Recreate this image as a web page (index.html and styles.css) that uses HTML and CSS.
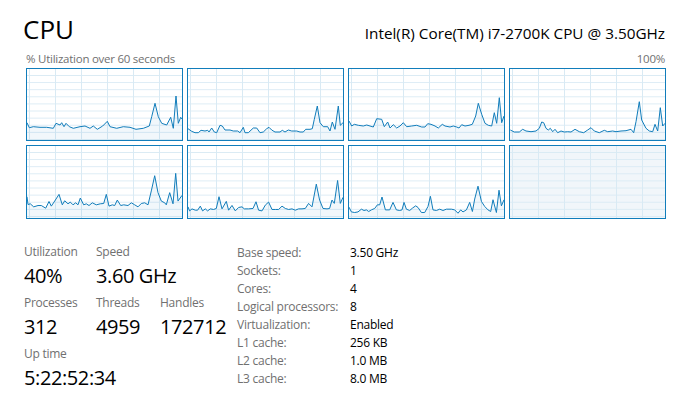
FILE: index.html
```html
<!DOCTYPE html>
<html lang="en">
  <head>
    <meta charset="UTF-8" />
    <meta name="viewport" content="width=device-width, initial-scale=1.0" />
    <title>CPU Performance</title>
    <link rel="stylesheet" href="styles.css">
  </head>
  <body>
    <div class="title-row">
      <h1 class="title">CPU</h1>
      <div class="model">Intel(R) Core(TM) i7-2700K CPU @ 3.50GHz</div>
    </div>

    <div class="graph-caption">
      <span>% Utilization over 60 seconds</span>
      <span>100%</span>
    </div>

    <div class="graphs">
      <div class="graph" data-points="0,53.7 2.3,58.7 6.3,57.7 13,58.3 19.7,58.3 26.3,59.3 29,54.3 33,56 34.7,53.7 37,57.7 39,54.3 42.3,57.7 46.3,59.3 53,57.7 58,57 63,59.3 66.3,57 70.3,60.3 75.7,57 80.3,52.3 83,57.7 89.7,59.3 96.3,57.7 103,58.3 109,60.3 116.3,59.3 122.3,57 124.7,47.7 128,34.3 131.3,47.7 134.7,54.3 139.7,56 143.7,48.3 146.3,59.3 149,27 151.3,54.3 153.7,48.3 155,50"></div>
      <div class="graph" data-points="0,59.7 3.7,62.3 7,63.7 10.3,63.7 13,61.3 17,62 19.7,61.3 21,63 23.7,59 26.3,63 28.7,63.7 32,56.3 34.3,57 37,61 42,61 45.3,62 49.7,62 52,63.7 55.3,58.3 57,63.7 60.3,63.7 65.3,59 68.7,59 72,63.7 75.3,63 78.7,59.7 81,58.3 83.7,61 87,63 92,63 94.3,61.3 97,63 100.3,61 103.7,62 108.7,62 112,63 115.3,63 117.7,60.3 122,60.3 124.3,59.7 126.3,50.3 129.3,37 132,53.7 135.3,57.7 139.7,57.7 142,62 144.3,53 147,60.3 150.3,37 152.3,56.3 155,53.7"></div>
      <div class="graph" data-points="0,52 2.7,57 5.3,55.3 9.3,56.3 14.3,57 17.7,56 21,57 24.3,58 27.7,49.7 32.7,50.3 35.3,57.7 38.7,53 41,59 44.3,55.7 47.7,59 51,57 54.3,53.7 57.7,57.7 62.7,57 67.7,56.3 72.7,58 76,58 78.7,54.7 82,55.3 86,57 89.3,59 93.3,55.3 96,57 101,58 104.3,57 107.7,58 110,59 112.7,55.7 116,57 120,56.3 123.3,55.3 126.7,47 129.3,34.3 132.7,45.3 136,54.3 139.3,56.3 142.7,57 145.3,43.7 147.7,54.3 150.3,28.7 152.7,53.7 155,47"></div>
      <div class="graph" data-points="0.3,61 4.3,63 9.3,63 12.7,60.3 16,62 21,62.7 26,62 29.3,59.3 31.7,53 33.7,53.7 36,59.3 38.3,61 40.3,59.3 42.7,62.7 45,60.3 47.7,63.7 51,62 54.3,63 57.7,62.7 61,63 65,60.3 69.3,62.7 73.7,63.7 77.7,61 81,58.7 84.3,62 89.3,63.7 94.3,61.3 97.7,62.7 102.7,62 106,62.7 111,62 116,61.7 121,60.3 123.7,63.7 126,52.7 129.3,32.7 131.7,51 136,59.3 139.3,62 142.7,62.7 145,55.3 147.7,62 150.3,38.7 152.7,57 155,54.3"></div>
      <div class="graph" data-points="0,50 1,57.7 3.3,57 6.7,60 11,58.7 14.3,58.7 18.7,61.3 22,54.7 24.3,59.3 27.7,54.3 32,47.7 35.3,58 37.7,54 41,57 43.3,55.3 46,58 48.7,56 51,58 53.3,51.3 56.7,58 59.3,57 62,58.7 65.3,56 69.3,58 73.3,57 76.7,56.7 79.3,47.7 82,59.3 85.3,58 87.7,58.7 90.3,53.3 93.7,58.7 96.7,58 101,58.7 104.3,56 107.7,58 111,60 114.3,56.7 117.7,56 121,58 124.3,44.3 127.7,29.3 131,46 134.3,54.3 137.7,56 139.3,58 142.7,46 146,57 148.7,27 151,54.3 155,48.7"></div>
      <div class="graph" data-points="0,60 1.6,64 4,62 7.3,63.3 9.6,63.3 12.3,59.3 14.6,64 17.3,62 19.6,64 22.3,62 25.6,62.6 28.3,61.6 31,50 34,62 38.3,54.6 40.6,63.3 44,58.6 47.3,64 50.6,60.6 54,60 56.3,62 60.6,62 65,61.6 68,55 70.6,63.3 74,64 77.3,58.3 80.6,55.3 84,62.6 87.3,62.6 90.6,62.6 94,59.3 97.3,61.6 100.6,62.6 104,62 107.3,63.3 110.6,62 114,62 117.3,61.6 120.6,56.6 124,60 128.3,37.6 131.6,53.3 135,61.6 139,62 141.6,61.6 144,53.3 146.3,56.6 149.6,34 152.3,56.6 155,50.6"></div>
      <div class="graph" data-points="0,60.3 2.4,65 5.7,65.6 9,65 12.4,62.3 15,63.6 17.4,63 19.7,64.6 22.4,63 25.7,61.6 28.4,58 30.7,58 33,50.3 36.4,63 40.7,63 44,55.6 47.4,63 50.7,63.6 53,63 55,55.6 57.4,62.3 60.7,63.6 63.4,61.3 66.7,59 69,60.6 72.4,65.6 75.7,65.6 79,59.6 81.4,49.6 84,63 87.4,63.6 90.7,62.3 94,63.6 97.4,62.3 102.4,62.3 105.7,63 109,66.3 111.7,63 114,65 117.4,63 120.7,55.6 123.4,64.6 125.7,52.3 129,39.6 132.4,54.6 135.7,59.6 139,63 141.7,64.6 144,53 147.4,65.6 150,43.6 152.4,59 155,53"></div>
      <div class="graph idle"></div>
    </div>

    <div class="details">
      <div class="stats">
        <div class="stat-row">
          <div class="stat">
            <div class="label">Utilization</div>
            <div class="value">40%</div>
          </div>
          <div class="stat">
            <div class="label">Speed</div>
            <div class="value">3.60 GHz</div>
          </div>
        </div>
        <div class="stat-row">
          <div class="stat">
            <div class="label">Processes</div>
            <div class="value">312</div>
          </div>
          <div class="stat">
            <div class="label">Threads</div>
            <div class="value">4959</div>
          </div>
          <div class="stat">
            <div class="label">Handles</div>
            <div class="value">172712</div>
          </div>
        </div>
        <div class="stat-row">
          <div class="stat">
            <div class="label">Up time</div>
            <div class="value">5:22:52:34</div>
          </div>
        </div>
      </div>

      <div class="specs">
        <span class="spec-name">Base speed:</span><span>3.50 GHz</span>
        <span class="spec-name">Sockets:</span><span>1</span>
        <span class="spec-name">Cores:</span><span>4</span>
        <span class="spec-name">Logical processors:</span><span>8</span>
        <span class="spec-name">Virtualization:</span><span>Enabled</span>
        <span class="spec-name">L1 cache:</span><span>256 KB</span>
        <span class="spec-name">L2 cache:</span><span>1.0 MB</span>
        <span class="spec-name">L3 cache:</span><span>8.0 MB</span>
      </div>
    </div>

    <script>
      // build the usage charts from the sampled points
      document.querySelectorAll(".graph[data-points]").forEach(function (graph) {
        var pts = graph.dataset.points;
        graph.innerHTML =
          '<svg viewBox="0 0 155 71" preserveAspectRatio="none">' +
          '<polygon class="area" points="0,71 ' + pts + ' 155,71" />' +
          '<polyline class="line" points="' + pts + '" />' +
          "</svg>";
      });
    </script>
  </body>
</html>
```

FILE: styles.css
```css
body {
  margin: 0;
  background-color: #fff;
  color: #000;
  font-family: "Segoe UI", "Open Sans", sans-serif;
}

.title-row {
  display: flex;
  justify-content: space-between;
  align-items: baseline;
  padding: 14px 14px 0 23px;
}

.title {
  margin: 0;
  font-size: 26px;
  font-weight: 400;
  line-height: 30px;
}

.model {
  font-size: 15.3px;
}

.graph-caption {
  display: flex;
  justify-content: space-between;
  margin: 8px 14px 0 26px;
  font-size: 11.5px;
  line-height: 14px;
  letter-spacing: -0.25px;
  color: #707070;
}

.graphs {
  display: grid;
  grid-template-columns: repeat(4, 1fr);
  grid-template-rows: 73px 74px;
  gap: 4px;
  margin: 2px 13px 0 26px;
}

.graph {
  box-sizing: border-box;
  border: 1px solid #117dbb;
  background-color: #fff;
  background-image: linear-gradient(to right, #d9eaf4 1px, transparent 1px),
    linear-gradient(to bottom, #d9eaf4 1px, transparent 1px);
  background-size: 26px 7.1px;
  background-position: 2px -1px;
}

.graph.idle {
  background-color: #f1f6fa;
}

.graph svg {
  display: block;
  width: 100%;
  height: 100%;
}

.graph .area {
  fill: rgba(17, 125, 187, 0.06);
  stroke: none;
}

.graph .line {
  fill: none;
  stroke: #117dbb;
  stroke-width: 1;
  stroke-linejoin: round;
  vector-effect: non-scaling-stroke;
}

.details {
  display: flex;
  align-items: flex-start;
  margin-top: 25px;
  padding-left: 24px;
}

.stats {
  width: 213px;
}

.stat-row {
  display: grid;
  grid-template-columns: 72px 64px auto;
  margin-bottom: 7px;
}

.label {
  font-size: 12px;
  line-height: 16px;
  letter-spacing: -0.25px;
  color: #707070;
  white-space: nowrap;
}

.value {
  margin-top: 4px;
  font-size: 20px;
  line-height: 24px;
  letter-spacing: -0.4px;
  white-space: nowrap;
}

.specs {
  display: grid;
  grid-template-columns: 113px auto;
  font-size: 12px;
  line-height: 18px;
  letter-spacing: -0.25px;
}

.spec-name {
  color: #707070;
}
```
